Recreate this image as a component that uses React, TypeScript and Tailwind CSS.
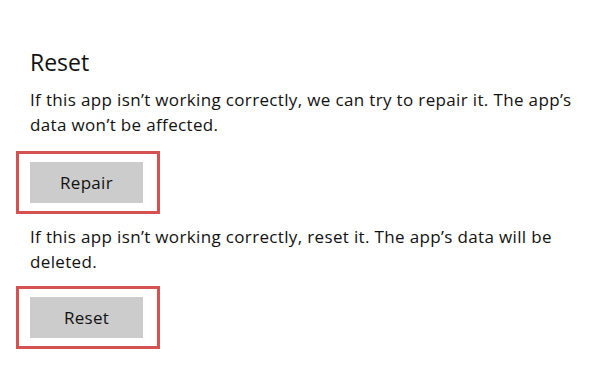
import React from 'react';

interface ActionBlockProps {
  description: string;
  label: string;
  gap: string;
}

function ActionBlock({ description, label, gap }: ActionBlockProps) {
  return (
    <div className="flex flex-col">
      <p className="pl-[14px] w-[574px] text-[17px] leading-[25px] tracking-[0.35px] text-[#111111]">
        {description}
      </p>
      {/* highlighted button */}
      <div className={`${gap} self-start border-[3px] border-[#d65252] py-[8px] pl-[11px] pr-[14px]`}>
        <button className="w-[113px] h-[41px] bg-[#cccccc] text-[17px] tracking-[0.3px] text-[#111111] flex items-center justify-center">
          {label}
        </button>
      </div>
    </div>
  );
}

export default function App() {
  return (
    <div
      className="w-[606px] h-[370px] bg-white pl-4 pt-[47px] flex flex-col overflow-hidden"
      style={{ fontFamily: '"Open Sans", "Noto Sans", sans-serif' }}
    >
      <h2 className="pl-[14px] text-[23px] leading-[30px] text-[#111111]">Reset</h2>
      <div className="mt-[10px] flex flex-col gap-[10px]">
        <ActionBlock
          description="If this app isn’t working correctly, we can try to repair it. The app’s data won’t be affected."
          label="Repair"
          gap="mt-[14px]"
        />
        <ActionBlock
          description="If this app isn’t working correctly, reset it. The app’s data will be deleted."
          label="Reset"
          gap="mt-[12px]"
        />
      </div>
    </div>
  );
}
